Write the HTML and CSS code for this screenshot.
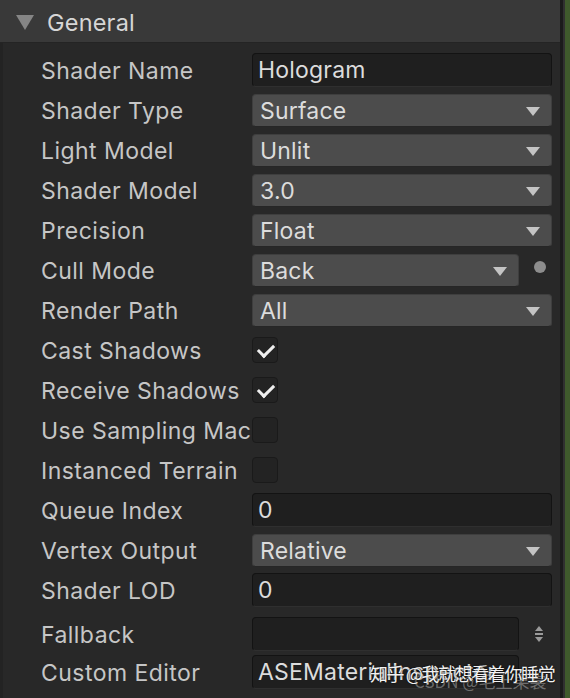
FILE: index.html
```html
<!DOCTYPE html>
<html lang="en">
<head>
    <meta charset="UTF-8">
    <title>Shader Properties - General</title>
    <link rel="stylesheet" href="styles.css">
</head>

<body>
    <div class="window">
        <section class="inspector">
            <!-- foldout header -->
            <header class="foldout">
                <span class="foldout-arrow"></span>
                <span class="foldout-title">General</span>
            </header>

            <div class="props">
                <div class="row">
                    <label class="name">Shader Name</label>
                    <div class="field text">Hologram</div>
                </div>
                <div class="row">
                    <label class="name">Shader Type</label>
                    <div class="field popup">Surface<i class="caret"></i></div>
                </div>
                <div class="row">
                    <label class="name">Light Model</label>
                    <div class="field popup">Unlit<i class="caret"></i></div>
                </div>
                <div class="row">
                    <label class="name">Shader Model</label>
                    <div class="field popup">3.0<i class="caret"></i></div>
                </div>
                <div class="row">
                    <label class="name">Precision</label>
                    <div class="field popup">Float<i class="caret"></i></div>
                </div>
                <div class="row">
                    <label class="name">Cull Mode</label>
                    <div class="field popup short">Back<i class="caret"></i></div>
                    <span class="dot"></span>
                </div>
                <div class="row">
                    <label class="name">Render Path</label>
                    <div class="field popup">All<i class="caret"></i></div>
                </div>
                <div class="row">
                    <label class="name">Cast Shadows</label>
                    <span class="toggle on"></span>
                </div>
                <div class="row">
                    <label class="name">Receive Shadows</label>
                    <span class="toggle on"></span>
                </div>
                <div class="row">
                    <label class="name">Use Sampling Macros</label>
                    <span class="toggle"></span>
                </div>
                <div class="row">
                    <label class="name">Instanced Terrain</label>
                    <span class="toggle"></span>
                </div>
                <div class="row">
                    <label class="name">Queue Index</label>
                    <div class="field text">0</div>
                </div>
                <div class="row">
                    <label class="name">Vertex Output</label>
                    <div class="field popup">Relative<i class="caret"></i></div>
                </div>
                <div class="row">
                    <label class="name">Shader LOD</label>
                    <div class="field text">0</div>
                </div>
                <div class="row fallback">
                    <label class="name">Fallback</label>
                    <div class="field text short"></div>
                    <svg class="spin" width="12" height="18" viewBox="0 0 12 18">
                        <path d="M6 1 L10 6 H2 Z" fill="#9a9a9a"/>
                        <rect x="2" y="8" width="8" height="2" fill="#9a9a9a"/>
                        <path d="M2 12 H10 L6 17 Z" fill="#9a9a9a"/>
                    </svg>
                </div>
                <div class="row editor">
                    <label class="name">Custom Editor</label>
                    <div class="field text short">ASEMaterialInspector</div>
                </div>
            </div>

            <!-- site watermark -->
            <div class="mark-back">CSDN @毛上果裳</div>
            <div class="mark">知乎 @我就想看着你睡觉</div>
        </section>
        <div class="split"></div>
        <div class="scene"></div>
    </div>
</body></html>
```

FILE: styles.css
```css
html,
body {
    margin: 0;
    padding: 0;
}

body {
    background-color: #282828;
    font-family: Inter, "Noto Sans", "Noto Sans CJK SC", sans-serif;
    overflow: hidden;
}

/*인스펙터 + 구분선 + 씬뷰*/
.window {
    display: flex;
    height: 698px;
}

.inspector {
    position: relative;
    flex: 1;
    background-color: #282828;
    overflow: hidden;
}

.split {
    width: 3px;
    background-color: #1b1b1b;
    border-right: 2px solid #303030;
}

.scene {
    width: 5px;
    background-color: #3f5a2c;
}

/*폴드아웃 헤더*/
.foldout {
    display: flex;
    align-items: center;
    height: 43px;
    padding-top: 3px;
    background-color: #393939;
    border-bottom: 1px solid #242424;
    box-sizing: border-box;
}

.foldout-arrow {
    width: 0;
    height: 0;
    margin: 0 13px 0 16px;
    border-left: 9px solid transparent;
    border-right: 9px solid transparent;
    border-top: 15px solid #858585;
}

.foldout-title {
    color: #d6d6d6;
    font-size: 23.5px;
    letter-spacing: .2px;
}

/*속성 목록*/
.props {
    padding-top: 7px;
    border-left: 3px solid #232323;
    height: 655px;
}

.row {
    display: flex;
    align-items: center;
    height: 40px;
    padding-left: 38px;
}

.name {
    width: 211px;
    flex: none;
    padding-top: 2px;
    color: #c6c6c6;
    font-size: 23px;
    letter-spacing: .45px;
    white-space: nowrap;
    overflow: hidden;
}

.field {
    position: relative;
    width: 300px;
    height: 34px;
    box-sizing: border-box;
    border-radius: 4px;
    color: #dcdcdc;
    font-size: 23px;
    letter-spacing: .2px;
    line-height: 33px;
    white-space: nowrap;
    overflow: hidden;
}

.field.short {
    width: 267px;
}

/*텍스트 입력칸*/
.text {
    background-color: #1f1f1f;
    border: 1px solid #131313;
    border-bottom-color: #2f2f2f;
    padding-left: 5px;
}

/*드롭다운*/
.popup {
    height: 33px;
    background-color: #4c4c4c;
    border: 1px solid #3e3e3e;
    border-bottom-color: #262626;
    padding-left: 7px;
}

.caret {
    position: absolute;
    right: 11px;
    top: 12px;
    width: 0;
    height: 0;
    border-left: 7px solid transparent;
    border-right: 7px solid transparent;
    border-top: 9px solid #c4c4c4;
}

.dot {
    width: 12px;
    height: 12px;
    margin-left: 15px;
    margin-top: -6px;
    border-radius: 50%;
    background-color: #8d8d8d;
}

/*체크박스*/
.toggle {
    position: relative;
    width: 26px;
    height: 26px;
    box-sizing: border-box;
    background-color: #232323;
    border: 1px solid #1a1a1a;
    border-radius: 4px;
}

.toggle.on::after {
    content: "";
    position: absolute;
    left: 8px;
    top: 3px;
    width: 7px;
    height: 13px;
    border-right: 3px solid #eeeeee;
    border-bottom: 3px solid #eeeeee;
    transform: rotate(45deg);
}

.fallback {
    margin-top: 4px;
}

.editor {
    margin-top: -2px;
}

.spin {
    margin-left: 14px;
}

/*워터마크*/
.mark,
.mark-back {
    position: absolute;
    white-space: nowrap;
    font-family: "Noto Sans CJK SC", sans-serif;
}

.mark {
    left: 370px;
    top: 660px;
    color: #f2f2f2;
    font-size: 18px;
    letter-spacing: -1.4px;
    text-shadow: 0 0 2px #000;
}

.mark-back {
    left: 414px;
    top: 668px;
    color: rgba(200, 200, 200, .45);
    font-size: 17px;
}
```
